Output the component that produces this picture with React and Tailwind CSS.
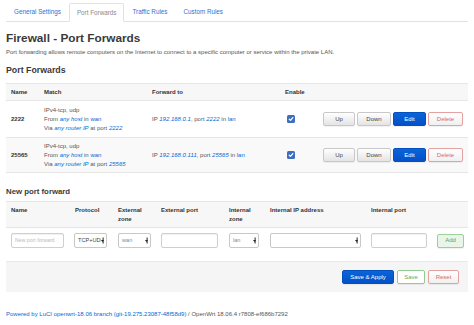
import React from 'react'

// LuCI firewall "Port Forwards" page, scaled down to fit the small viewport.

const RULES = [
  { name: '2222', ip: '192.168.0.1', port: '2222', h: 'h-[37px]', bg: 'bg-white' },
  { name: '25565', ip: '192.168.0.111', port: '25565', h: 'h-[35px]', bg: 'bg-[#f9f9f9]' },
]

const ROW_COLS = 'grid grid-cols-[33px_108px_133px_38px_1fr]'
const NEW_COLS = 'grid grid-cols-[64px_43px_43px_68px_41px_101px_66px_1fr]'

function Link({ children, italic }) {
  return <span className={`text-[#0069d6] ${italic ? 'italic' : ''}`}>{children}</span>
}

function Btn({ children, kind = 'default', w }) {
  const styles = {
    default: 'bg-linear-to-b from-white to-[#e4e4e4] border-[#c8c8c8] text-[#444]',
    primary: 'bg-linear-to-b from-[#0a64d8] to-[#0550c8] border-[#0550c0] text-white',
    negative: 'bg-linear-to-b from-white to-[#f0f0f0] border-[#e3a1a1] text-[#d66a6a]',
    positive: 'bg-white border-[#92cc92] text-[#5cad5c]',
    add: 'bg-[#eaf5ea] border-[#9ccf9c] text-[#5f9f5f]',
  }
  return (
    <div
      className={`h-[14px] ${w} flex items-center justify-center rounded-[2px] border text-[6px] shadow-[0_1px_1px_rgba(0,0,0,0.06)] ${styles[kind]}`}
    >
      {children}
    </div>
  )
}

function Check() {
  return (
    <div className="w-[8px] h-[8px] rounded-[1.5px] bg-[#3b6fbf] flex items-center justify-center">
      <svg width="6" height="6" viewBox="0 0 6 6" fill="none" stroke="white" strokeWidth="1.3" strokeLinecap="round" strokeLinejoin="round">
        <polyline points="1.2 3.1 2.5 4.4 4.8 1.6" />
      </svg>
    </div>
  )
}

function FakeSelect({ w, value, dark }) {
  return (
    <div className={`h-[15px] ${w} flex items-center rounded-[2px] border border-[#c8c8c8] bg-white pl-[3px] pr-[2px] overflow-hidden`}>
      <span className={`flex-1 min-w-0 overflow-hidden text-[5.6px] whitespace-nowrap ${dark ? 'text-[#444]' : 'text-[#888]'}`}>{value}</span>
      <svg width="3" height="7" viewBox="0 0 3 7" className="shrink-0">
        <rect x="1.6" y="0.5" width="1" height="6" fill="#222" />
        <polygon points="0,3 3,3 1.5,5" fill="#222" />
      </svg>
    </div>
  )
}

function FakeInput({ w, placeholder }) {
  return (
    <div className={`h-[15px] ${w} flex items-center rounded-[2px] border border-[#cfcfcf] bg-white pl-[3px] shadow-[inset_0_1px_1px_rgba(0,0,0,0.06)]`}>
      {placeholder && <span className="text-[5.2px] text-[#bbb] whitespace-nowrap">{placeholder}</span>}
    </div>
  )
}

export default function App() {
  return (
    <div className="w-[474px] h-[325px] overflow-hidden bg-white font-['Liberation_Sans',Arial,sans-serif] text-[#404040]">
      <div className="px-[6px]">
        {/* tabs */}
        <div className="flex items-end pt-[3px] border-b border-[#e2e2e2] text-[6.3px]">
          <div className="h-[18px] px-[8px] flex items-center text-[#2a72d6]">General Settings</div>
          <div className="h-[19px] -mb-px px-[7px] flex items-center text-[#8a8a8a] bg-white border border-[#e2e2e2] border-b-white rounded-t-[2px]">
            Port Forwards
          </div>
          <div className="h-[18px] px-[8px] flex items-center text-[#2a72d6]">Traffic Rules</div>
          <div className="h-[18px] px-[8px] flex items-center text-[#2a72d6]">Custom Rules</div>
        </div>

        <h2 className="mt-[9px] text-[11.8px] leading-[14px] font-bold text-[#3a3a3a]">Firewall - Port Forwards</h2>
        <p className="mt-[3px] text-[6px] leading-[8px] text-[#555]">
          Port forwarding allows remote computers on the Internet to connect to a specific computer or service within the private LAN.
        </p>

        <h3 className="mt-[9px] text-[8.8px] leading-[10px] font-bold text-[#3a3a3a]">Port Forwards</h3>

        {/* existing rules */}
        <div className="mt-[8px] text-[6px]">
          <div className={`${ROW_COLS} h-[18px] items-center bg-[#f7f7f7] border-t border-b border-[#e6e6e6] font-bold text-[#333]`}>
            <div className="pl-[5px]">Name</div>
            <div className="pl-[5px]">Match</div>
            <div className="pl-[5px]">Forward to</div>
            <div className="pl-[5px]">Enable</div>
            <div />
          </div>
          {RULES.map(r => (
            <div key={r.name} className={`${ROW_COLS} ${r.h} ${r.bg} items-center border-b border-[#e6e6e6]`}>
              <div className="pl-[5px] font-bold text-[#333]">{r.name}</div>
              <div className="pl-[5px] leading-[9px] text-[#555]">
                <div>IPv4-tcp, udp</div>
                <div>From <Link italic>any host</Link> in <Link>wan</Link></div>
                <div>Via <Link italic>any router IP</Link> at port <Link italic>{r.port}</Link></div>
              </div>
              <div className="pl-[5px] text-[#555] whitespace-nowrap">
                IP <Link italic>{r.ip}</Link>, port <Link italic>{r.port}</Link> in <Link>lan</Link>
              </div>
              <div className="pl-[7px]"><Check /></div>
              <div className="flex justify-end gap-[2px] pr-[5px]">
                <Btn w="w-[32px]">Up</Btn>
                <Btn w="w-[34px]">Down</Btn>
                <Btn w="w-[33px]" kind="primary">Edit</Btn>
                <Btn w="w-[35px]" kind="negative">Delete</Btn>
              </div>
            </div>
          ))}
        </div>

        <h3 className="mt-[14px] text-[7.8px] leading-[9px] font-bold text-[#3a3a3a]">New port forward</h3>

        {/* new rule form */}
        <div className="mt-[5px] text-[6px]">
          <div className={`${NEW_COLS} h-[27px] pt-[4px] leading-[9px] bg-[#f7f7f7] border-t border-b border-[#e6e6e6] font-bold text-[#333]`}>
            <div className="pl-[5px]">Name</div>
            <div className="pl-[5px]">Protocol</div>
            <div className="pl-[5px]">External<br />zone</div>
            <div className="pl-[5px]">External port</div>
            <div className="pl-[5px]">Internal<br />zone</div>
            <div className="pl-[5px]">Internal IP address</div>
            <div className="pl-[5px]">Internal port</div>
            <div />
          </div>
          <div className={`${NEW_COLS} pt-[5px] pb-[6px] items-center`}>
            <div className="pl-[5px]"><FakeInput w="w-[53px]" placeholder="New port forward" /></div>
            <div className="pl-[4px]"><FakeSelect w="w-[33px]" value="TCP+UDP" dark /></div>
            <div className="pl-[5px]"><FakeSelect w="w-[33px]" value="wan" /></div>
            <div className="pl-[5px]"><FakeInput w="w-[57px]" /></div>
            <div className="pl-[5px]"><FakeSelect w="w-[30px]" value="lan" /></div>
            <div className="pl-[5px]"><FakeSelect w="w-[91px]" value="" /></div>
            <div className="pl-[5px]"><FakeInput w="w-[56px]" /></div>
            <div className="pl-[5px]"><Btn w="w-[27px]" kind="add">Add</Btn></div>
          </div>
        </div>

        {/* page actions */}
        <div className="mt-[7px] h-[31px] flex items-center justify-end gap-[3px] pr-[9px] bg-[#f5f5f5] border-t border-[#e8e8e8]">
          <Btn w="w-[52px]" kind="primary">Save &amp; Apply</Btn>
          <Btn w="w-[28px]" kind="positive">Save</Btn>
          <Btn w="w-[31px]" kind="negative">Reset</Btn>
        </div>

        <footer className="mt-[18px] text-[6px] leading-[8px] text-[#555] whitespace-nowrap">
          <span className="text-[#0069d6]">Powered by LuCI openwrt-18.06 branch (git-19.275.23087-48f58d9)</span>
          {' / OpenWrt 18.06.4 r7808-ef686b7292'}
        </footer>
      </div>
    </div>
  )
}
